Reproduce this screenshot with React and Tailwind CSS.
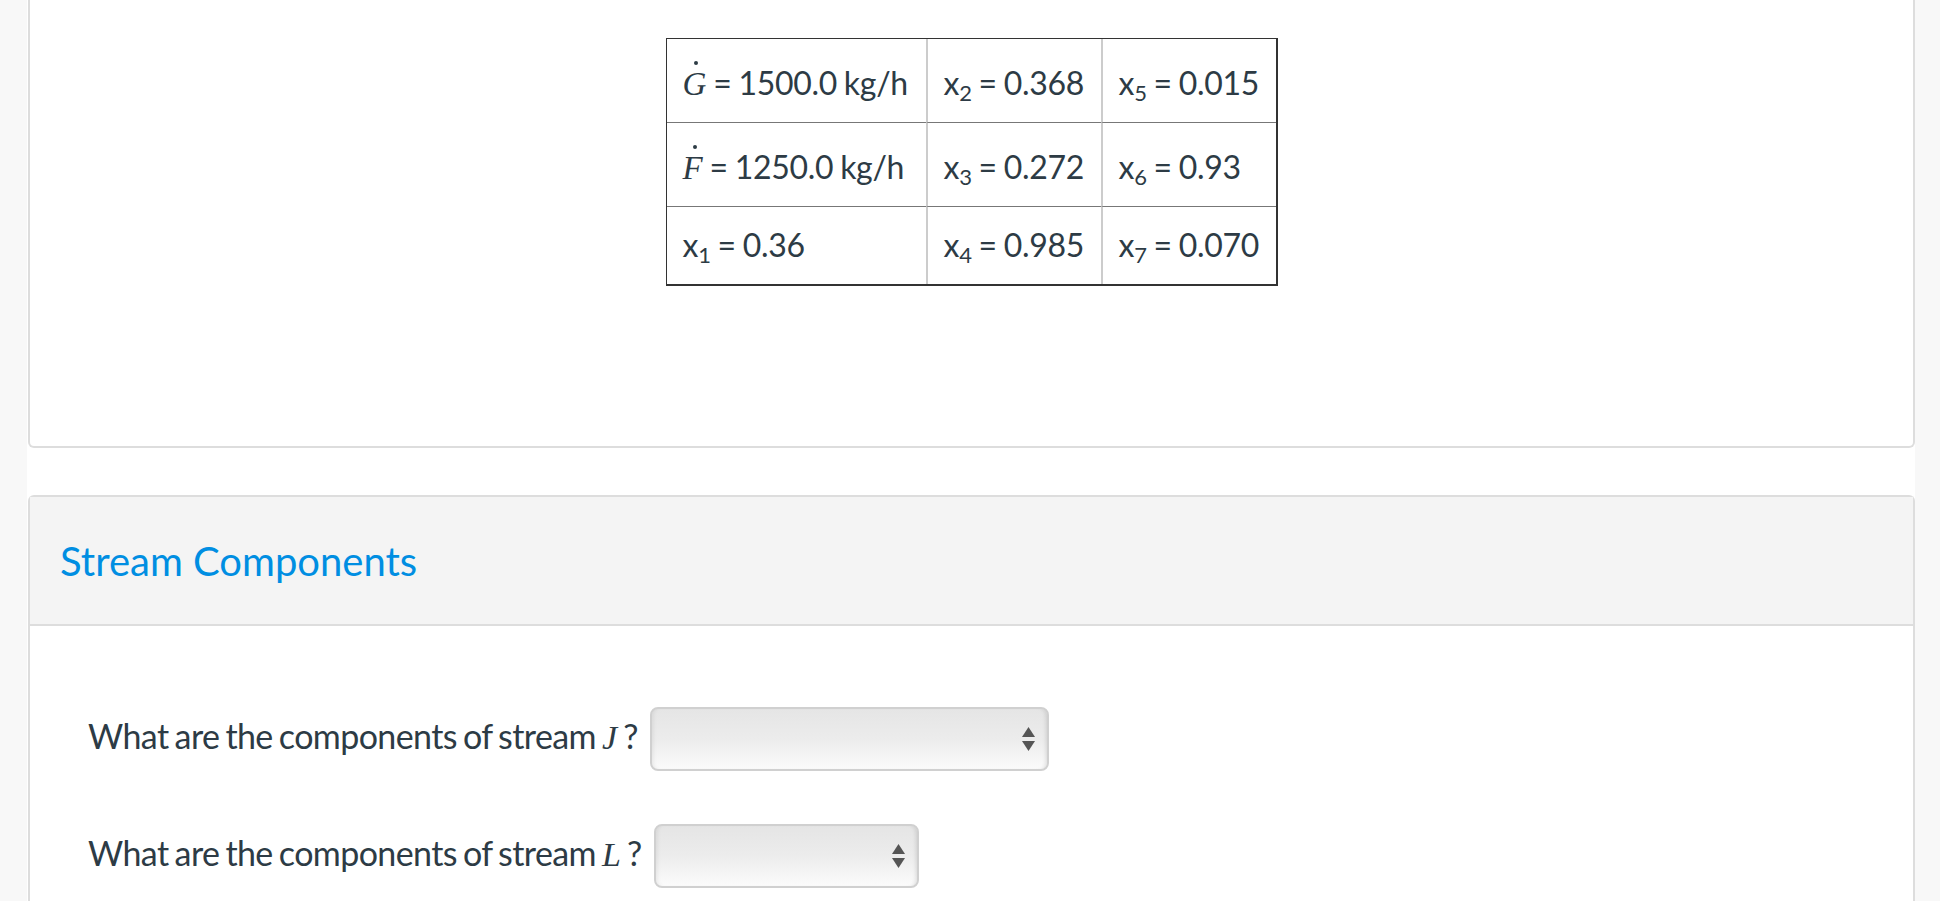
import React from "react";

const ink = "text-[#2d3b45]";

function Dot({ left }) {
  return (
    <span
      className="absolute top-[-6px] h-[4px] w-[4px] rounded-full bg-[#2d3b45]"
      style={{ left }}
    />
  );
}

function MathDot({ letter, left }) {
  return (
    <span className="relative inline-block font-['Liberation_Serif',serif] italic text-[33px] leading-[34px] tracking-normal">
      {letter}
      <Dot left={left} />
    </span>
  );
}

function X({ n, value }) {
  return (
    <span>
      x<sub className="text-[22px]">{n}</sub> = {value}
    </span>
  );
}

function Cell({ children, className = "" }) {
  return (
    <div className={`flex items-end pb-[19px] pl-[16px] whitespace-nowrap ${className}`}>
      <div className="leading-[40px]">{children}</div>
    </div>
  );
}

function Arrows() {
  return (
    <svg width="13" height="25" viewBox="0 0 13 25">
      <polygon points="6.5,0 13,10 0,10" fill="#555" />
      <polygon points="0,14 13,14 6.5,24" fill="#555" />
    </svg>
  );
}

function Select({ w }) {
  return (
    <div
      className={`flex h-[64px] shrink-0 items-center justify-end rounded-[8px] border-2 border-[#d0d0d0] bg-linear-to-b from-[#e5e5e5] via-[#ececec] to-[#fbfbfb] pr-[12px] shadow-[inset_-4px_0_4px_-3px_rgba(0,0,0,0.12),inset_4px_0_4px_-3px_rgba(0,0,0,0.08)] ${w}`}
    >
      <Arrows />
    </div>
  );
}

function Question({ letter, w }) {
  return (
    <div className="flex h-[64px] items-center gap-[12px]">
      <div
        className={`mb-[4px] text-[34px] leading-[42px] tracking-[-0.6px] [word-spacing:-2px] ${ink} whitespace-nowrap`}
      >
        What are the components of stream{" "}
        <span className="font-['Liberation_Serif',serif] italic text-[34px] tracking-normal">
          {letter}
        </span>{" "}
        ?
      </div>
      <Select w={w} />
    </div>
  );
}

export default function App() {
  return (
    <div className="min-h-[901px] bg-[#f8f8f8] font-['Lato',sans-serif]">
      <div className="ml-[27px] min-h-[901px] w-[1888px] bg-white pl-[1px]">
        {/* Card 1 */}
        <div className="rounded-b-[6px] border-x-2 border-b-2 border-[#dddddd] pt-[38px] pb-[160px]">
          <div
            className={`mx-auto grid w-fit grid-cols-[259px_175px_175px] border-t border-l border-r-2 border-b-2 border-[#333] text-[32px] tracking-[-0.3px] [word-spacing:-1px] ${ink}`}
          >
            <Cell className="h-[83px]">
              <MathDot letter="G" left="11px" />
              <span> = 1500.0 kg/h</span>
            </Cell>
            <Cell className="h-[83px] border-l-2 border-[#cccccc]">
              <X n="2" value="0.368" />
            </Cell>
            <Cell className="h-[83px] border-l-2 border-[#cccccc]">
              <X n="5" value="0.015" />
            </Cell>

            <Cell className="h-[84px] border-t border-t-[#777]">
              <MathDot letter="F" left="10px" />
              <span> = 1250.0 kg/h</span>
            </Cell>
            <Cell className="h-[84px] border-t border-l-2 border-[#cccccc] border-t-[#777]">
              <X n="3" value="0.272" />
            </Cell>
            <Cell className="h-[84px] border-t border-l-2 border-[#cccccc] border-t-[#777]">
              <X n="6" value="0.93" />
            </Cell>

            <Cell className="h-[78px] border-t border-t-[#777]">
              <X n="1" value="0.36" />
            </Cell>
            <Cell className="h-[78px] border-t border-l-2 border-[#cccccc] border-t-[#777]">
              <X n="4" value="0.985" />
            </Cell>
            <Cell className="h-[78px] border-t border-l-2 border-[#cccccc] border-t-[#777]">
              <X n="7" value="0.070" />
            </Cell>
          </div>
        </div>

        {/* Card 2 */}
        <div className="mt-[47px] rounded-t-[6px] border-x-2 border-t-2 border-[#dddddd]">
          <div className="flex h-[129px] items-center border-b-2 border-[#dddddd] bg-[#f4f4f4] pl-[30px]">
            <h2 className="text-[40px] leading-[48px] text-[#008ee2]">Stream Components</h2>
          </div>
          <div className="flex flex-col gap-[53px] pt-[81px] pb-[40px] pl-[58px]">
            <Question letter="J" w="w-[399px]" />
            <Question letter="L" w="w-[265px]" />
          </div>
        </div>
      </div>
    </div>
  );
}
